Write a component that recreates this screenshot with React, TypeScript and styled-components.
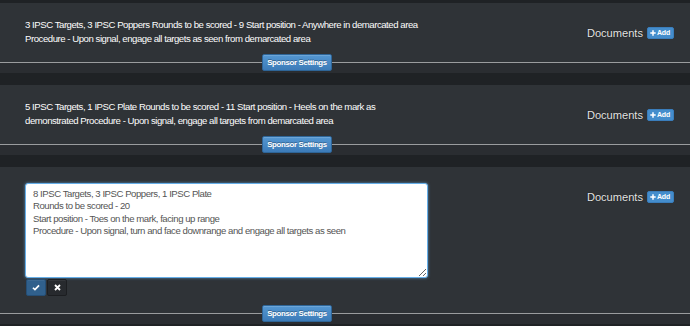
import React from "react";
import styled, { createGlobalStyle } from "styled-components";

const GlobalStyle = createGlobalStyle`
  html, body { margin: 0; padding: 0; background: #1f2225; }
  body { font-family: "Liberation Sans", Arial, Helvetica, sans-serif; }
  * { box-sizing: border-box; }
`;

const PANEL = "#2f3337";
const LOWER = "#2a2d31";

const Page = styled.div`
  width: 690px;
  height: 326px;
  overflow: hidden;
  padding-top: 3px;
  background: #1f2225;
`;

const Section = styled.section`
  background: ${PANEL};
  margin-bottom: 12px;
`;

const Body = styled.div`
  display: flex;
  justify-content: space-between;
  align-items: flex-start;
  padding: 15px 16px 0 25px;
`;

const Description = styled.p`
  width: 403px;
  margin: 0;
  color: #fdfdfd;
  font-size: 9.6px;
  letter-spacing: -0.46px;
  line-height: 14px;
`;

const Editor = styled.div`
  width: 403px;
  margin-top: 1px;
  display: flex;
  flex-direction: column;
`;

const TextArea = styled.textarea`
  width: 403px;
  height: 95px;
  margin: 0;
  padding: 4px 7px;
  border: 1px solid #66afe9;
  border-radius: 3px;
  box-shadow: 0 0 3px rgba(102, 175, 233, 0.7);
  background: #fff;
  color: #555;
  font-family: "Liberation Sans", Arial, sans-serif;
  font-size: 9.6px;
  letter-spacing: -0.46px;
  line-height: 12.3px;
  outline: none;
  display: block;
`;

const ButtonRow = styled.div`
  display: flex;
  gap: 1px;
  margin-top: 1px;
  padding-left: 1px;
`;

const IconButton = styled.button<{ $primary?: boolean }>`
  width: 20px;
  height: 17px;
  padding: 0;
  margin: 0;
  display: flex;
  align-items: center;
  justify-content: center;
  border-radius: 2px;
  border: 1px solid ${(p) => (p.$primary ? "#254e75" : "#1c1e21")};
  background: ${(p) => (p.$primary ? "#30608c" : "#272a2e")};
  box-shadow: inset 0 1px 0 rgba(255, 255, 255, 0.06);
`;

const Docs = styled.div`
  display: flex;
  align-items: center;
  gap: 4px;
  margin-top: 9px;
`;

const DocsLabel = styled.span`
  font-size: 11.1px;
  color: #e6e6e6;
  text-shadow: 0 0 1px #000;
  line-height: 12px;
`;

const AddButton = styled.button`
  height: 12px;
  padding: 0 3px 0 2px;
  margin: 0;
  display: flex;
  align-items: center;
  gap: 1px;
  border: 1px solid #3a7dbb;
  border-radius: 2px;
  background: #448dcc;
  color: #fff;
  font-family: "Liberation Sans", Arial, sans-serif;
  font-weight: bold;
  font-size: 7px;
  letter-spacing: -0.2px;
  line-height: 10px;
`;

const DividerRow = styled.div<{ $gap: number }>`
  display: flex;
  height: 17px;
  margin-top: ${(p) => p.$gap}px;
  background: linear-gradient(${PANEL} 0 8px, ${LOWER} 8px 100%);
`;

const Rule = styled.div<{ $width?: number }>`
  margin-top: 8px;
  height: 1px;
  background: #9a9c9e;
  ${(p) => (p.$width ? `width: ${p.$width}px; flex: none;` : "flex: 1;")}
`;

const SponsorButton = styled.button`
  width: 70px;
  height: 17px;
  margin: 0;
  padding: 0;
  flex: none;
  border: 1px solid #2e6597;
  border-radius: 2px;
  background: linear-gradient(#5497d2, #3c7bb8);
  box-shadow: inset 0 1px 0 rgba(255, 255, 255, 0.15);
  color: #fff;
  font-family: "Liberation Sans", Arial, sans-serif;
  font-weight: bold;
  font-size: 7.8px;
  letter-spacing: -0.3px;
  text-shadow: 0 -1px 0 rgba(0, 0, 0, 0.3);
`;

const Footer = styled.div`
  height: 2px;
  background: ${LOWER};
`;

const PlusIcon = () => (
  <svg width="6" height="6" viewBox="0 0 6 6">
    <path d="M3 0.3V5.7M0.3 3H5.7" stroke="#fff" strokeWidth="1.5" />
  </svg>
);

const CheckIcon = () => (
  <svg width="8" height="7" viewBox="0 0 9 8">
    <path d="M1 4.3L3.3 6.5L8 1.5" stroke="#fff" strokeWidth="1.9" fill="none" />
  </svg>
);

const CrossIcon = () => (
  <svg width="7" height="7" viewBox="0 0 7 7">
    <path d="M1 1L6 6M6 1L1 6" stroke="#fff" strokeWidth="1.8" />
  </svg>
);

const DocumentsBlock = () => (
  <Docs>
    <DocsLabel>Documents</DocsLabel>
    <AddButton>
      <PlusIcon />
      Add
    </AddButton>
  </Docs>
);

const Divider = ({ gap }: { gap: number }) => (
  <>
    <DividerRow $gap={gap}>
      <Rule $width={262} />
      <SponsorButton>Sponsor Settings</SponsorButton>
      <Rule />
    </DividerRow>
    <Footer />
  </>
);

const editText =
  "8 IPSC Targets, 3 IPSC Poppers, 1 IPSC Plate\nRounds to be scored - 20\nStart position - Toes on the mark, facing up range\nProcedure - Upon signal, turn and face downrange and engage all targets as seen";

export default function App() {
  return (
    <>
      <GlobalStyle />
      <Page>
        <Section>
          <Body>
            <Description>
              3 IPSC Targets, 3 IPSC Poppers Rounds to be scored - 9 Start position - Anywhere in demarcated area
              <br />
              Procedure - Upon signal, engage all targets as seen from demarcated area
            </Description>
            <DocumentsBlock />
          </Body>
          <Divider gap={8} />
        </Section>
        <Section>
          <Body>
            <Description>
              5 IPSC Targets, 1 IPSC Plate Rounds to be scored - 11 Start position - Heels on the mark as
              demonstrated Procedure - Upon signal, engage all targets from demarcated area
            </Description>
            <DocumentsBlock />
          </Body>
          <Divider gap={8} />
        </Section>
        <Section>
          <Body>
            <Editor>
              <TextArea defaultValue={editText} spellCheck={false} />
              <ButtonRow>
                <IconButton $primary>
                  <CheckIcon />
                </IconButton>
                <IconButton>
                  <CrossIcon />
                </IconButton>
              </ButtonRow>
            </Editor>
            <DocumentsBlock />
          </Body>
          <Divider gap={9} />
        </Section>
      </Page>
    </>
  );
}
